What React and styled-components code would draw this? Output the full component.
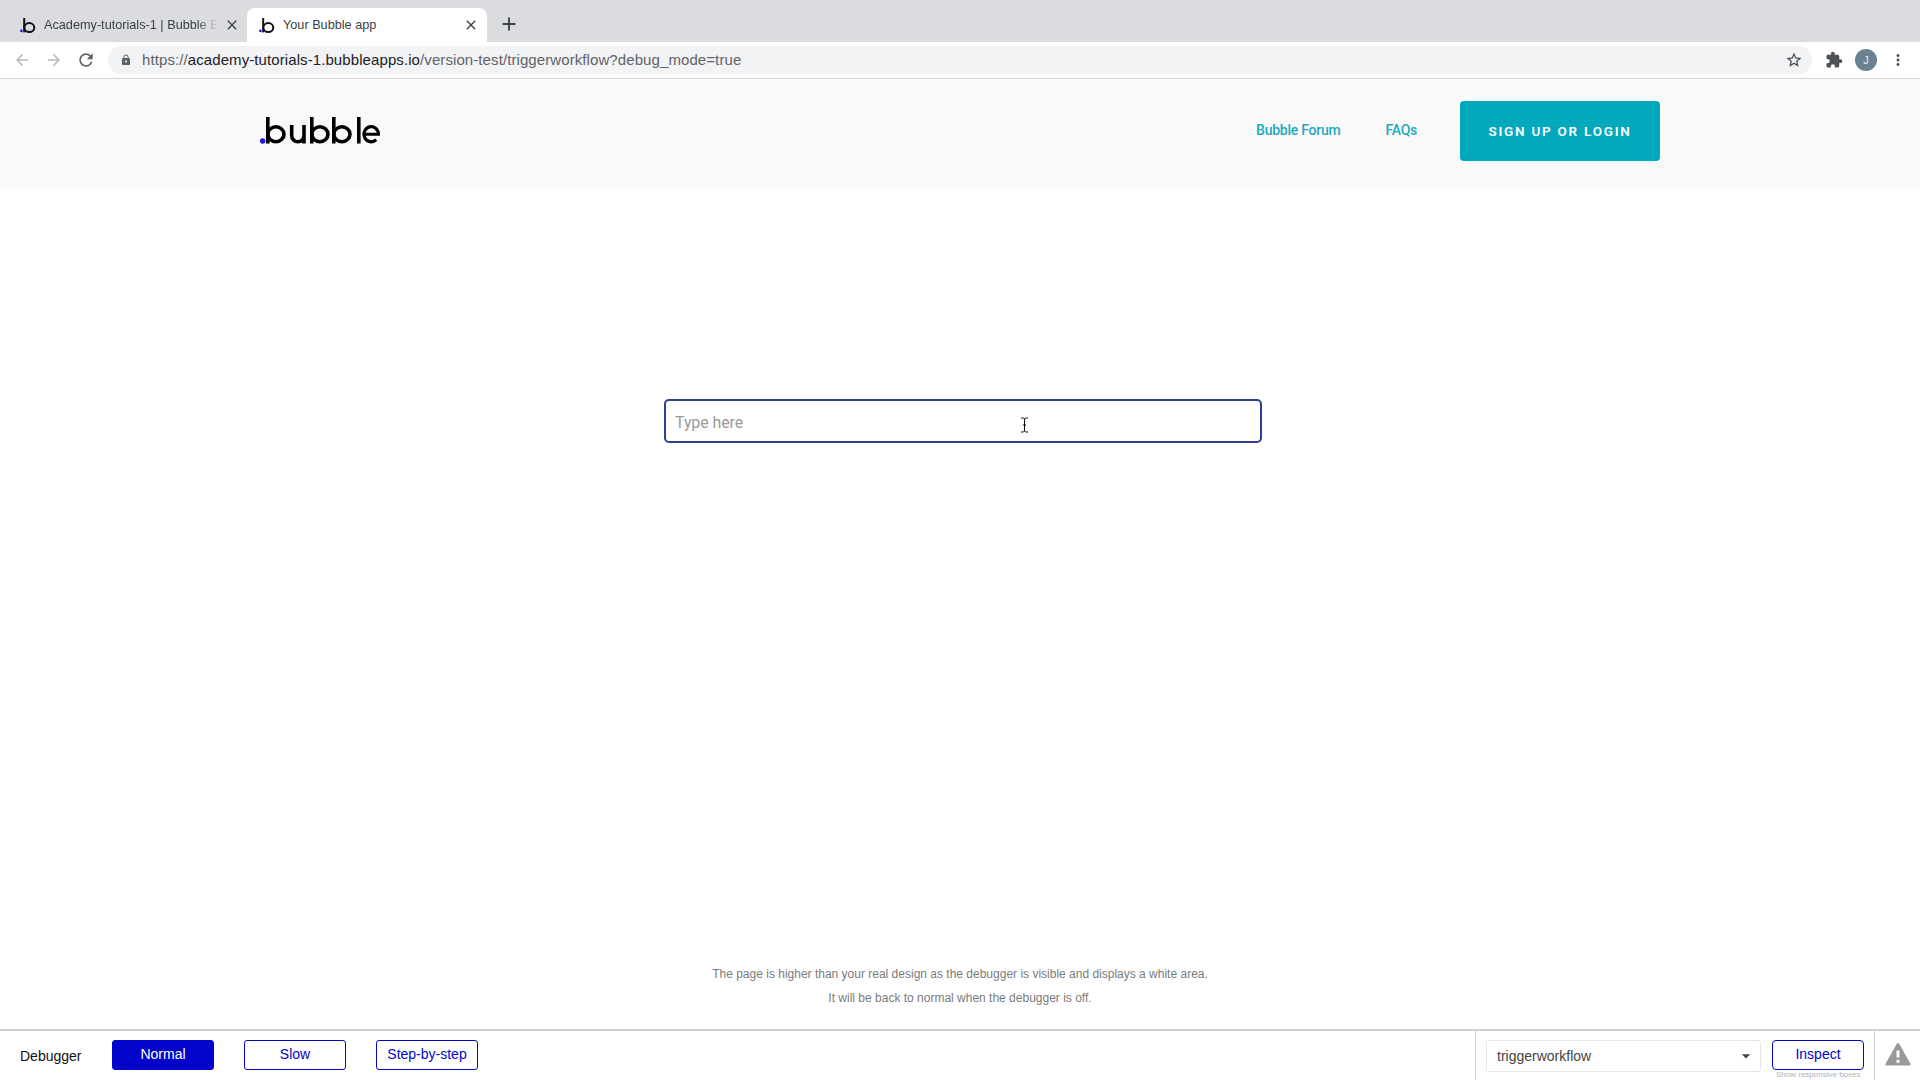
import React from "react";
import styled, { createGlobalStyle } from "styled-components";
import {
  MdArrowBack,
  MdArrowForward,
  MdRefresh,
  MdLock,
  MdStarBorder,
  MdExtension,
  MdMoreVert,
  MdClose,
  MdAdd,
  MdArrowDropDown,
} from "react-icons/md";

const Global = createGlobalStyle`
  html, body { margin: 0; padding: 0; height: 100%; background: #fff; }
  #root { height: 100%; }
  * { box-sizing: border-box; }
`;

const Page = styled.div`
  width: 1920px;
  height: 1080px;
  display: flex;
  flex-direction: column;
  overflow: hidden;
  font-family: "Liberation Sans", Arial, sans-serif;
  background: #fff;
`;

/* Browser chrome */
const TabStrip = styled.div`
  height: 42px;
  flex: none;
  background: #dadce0;
  display: flex;
  align-items: flex-end;
  padding-left: 8px;
`;

const Tab = styled.div`
  width: ${(p) => (p.$active ? 240 : 239)}px;
  height: 34px;
  display: flex;
  align-items: center;
  padding: 0 ${(p) => (p.$active ? 8 : 7)}px 0 12px;
  border-radius: 8px 8px 0 0;
  background: ${(p) => (p.$active ? "#fff" : "transparent")};
  color: #3c4043;
`;

const TabTitle = styled.span`
  flex: 1;
  min-width: 0;
  margin-left: 6px;
  font-size: 12.7px;
  white-space: nowrap;
  overflow: hidden;
  -webkit-mask-image: ${(p) => (p.$fade ? "linear-gradient(90deg, #000 88%, transparent 100%)" : "none")};
  mask-image: ${(p) => (p.$fade ? "linear-gradient(90deg, #000 88%, transparent 100%)" : "none")};
`;

const NewTab = styled.div`
  margin: 0 0 2px 10px;
  width: 24px;
  height: 32px;
  display: flex;
  align-items: center;
  justify-content: center;
  color: #3c4043;
`;

const Toolbar = styled.div`
  height: 37px;
  flex: none;
  background: #fff;
  border-bottom: 1px solid #d4d4da;
  display: flex;
  align-items: center;
  padding: 0 10px 1px 10px;
`;

const NavButton = styled.div`
  width: 24px;
  height: 24px;
  margin-right: ${(p) => p.$gap ?? 8}px;
  display: flex;
  align-items: center;
  justify-content: center;
  color: ${(p) => p.$color || "#5f6368"};
`;

const Omnibox = styled.div`
  flex: 1;
  height: 28px;
  border-radius: 14px;
  background: #f1f3f4;
  display: flex;
  align-items: center;
  padding: 0 9px 0 12px;
  margin-right: 10px;
`;

const Url = styled.div`
  flex: 1;
  margin-left: 10px;
  font-size: 15px;
  letter-spacing: 0.09px;
  color: #5f6368;
  white-space: nowrap;
`;

const UrlHost = styled.span`
  color: #202124;
`;

const Avatar = styled.div`
  width: 22px;
  height: 22px;
  margin: 0 9px 0 9px;
  border-radius: 50%;
  background: #6b8191;
  color: #e8edf0;
  font-size: 11px;
  display: flex;
  align-items: center;
  justify-content: center;
`;

/* Page header */
const Header = styled.header`
  height: 110px;
  flex: none;
  background: #f9f9f9;
  display: flex;
  align-items: center;
  padding: 0 260px 6px;
`;

const LogoMark = styled.svg`
  display: block;
  width: 120px;
  height: 30px;
`;

const HeaderNav = styled.nav`
  margin-left: auto;
  display: flex;
  align-items: center;
`;

const NavLink = styled.a`
  font-family: Roboto, sans-serif;
  font-size: 14px;
  font-weight: 500;
  letter-spacing: -0.25px;
  color: #1fa9bd;
  margin-right: ${(p) => p.$gap}px;
  margin-bottom: 2px;
`;

const SignUp = styled.button`
  width: 200px;
  height: 60px;
  border: 0;
  border-radius: 4px;
  background: #02a9bd;
  color: #fff;
  font-family: Roboto, sans-serif;
  font-size: 13.5px;
  font-weight: 600;
  letter-spacing: 1.75px;
`;

/* Main */
const Main = styled.main`
  flex: 1;
  display: flex;
  flex-direction: column;
  align-items: center;
  padding-top: 210px;
`;

const InputWrap = styled.div`
  position: relative;
  width: 598px;
  height: 44px;
  margin-left: 6px;
`;

const TextInput = styled.div`
  width: 100%;
  height: 100%;
  border: 2px solid #2f3f8f;
  border-radius: 5px;
  background: #fff;
  display: flex;
  align-items: center;
  padding: 2px 9px 0;
  font-family: Roboto, sans-serif;
  font-size: 16px;
  letter-spacing: -0.1px;
  color: #9a9a9a;
`;

const Cursor = styled.svg`
  position: absolute;
  left: 356px;
  top: 18px;
  width: 9px;
  height: 16px;
`;

const Notice = styled.div`
  margin-top: auto;
  padding-bottom: 19px;
  text-align: center;
  font-size: 12px;
  line-height: 24px;
  color: #7b7b7b;
`;

/* Debugger */
const DebugBar = styled.footer`
  height: 51px;
  flex: none;
  border-top: 2px solid #d0d0d0;
  display: flex;
  background: #fff;
`;

const DebugLeft = styled.div`
  flex: 1;
  display: flex;
  align-items: center;
  padding: 0 0 2px 20px;
`;

const DebugLabel = styled.span`
  width: 92px;
  font-size: 14px;
  color: #111;
  padding-top: 2px;
`;

const SpeedButton = styled.button`
  width: 102px;
  height: 30px;
  margin-right: 30px;
  padding: 0 0 2px;
  border: 1px solid #0205c9;
  border-radius: 3px;
  background: ${(p) => (p.$active ? "#0205c9" : "#fff")};
  color: ${(p) => (p.$active ? "#fff" : "#0205c9")};
  font-family: "Liberation Sans", Arial, sans-serif;
  font-size: 14px;
`;

const DebugRight = styled.div`
  position: relative;
  width: 400px;
  flex: none;
  border-left: 1px solid #d0d0d0;
  border-right: 1px solid #d0d0d0;
  display: flex;
  align-items: flex-start;
  padding: 9px 0 0 10px;
`;

const PageSelect = styled.div`
  width: 275px;
  height: 32px;
  border: 1px solid #e6e6e6;
  border-radius: 3px;
  display: flex;
  align-items: center;
  justify-content: space-between;
  padding: 0 4px 0 10px;
  font-size: 14px;
  color: #444;
`;

const InspectButton = styled(SpeedButton)`
  width: 92px;
  margin: 0 0 0 11px;
  border-radius: 4px;
`;

const Caption = styled.span`
  position: absolute;
  left: 300px;
  top: 39px;
  font-size: 8px;
  line-height: 9px;
  color: #aeb0b8;
  white-space: nowrap;
`;

const WarningSlot = styled.div`
  width: 45px;
  flex: none;
  display: flex;
  align-items: center;
  justify-content: center;
  padding-bottom: 3px;
`;

function WarningIcon() {
  return (
    <svg width="26" height="24" viewBox="0 0 26 24">
      <path d="M13 2.2 24.4 22.4H1.6Z" fill="#999" stroke="#999" strokeWidth="2.4" strokeLinejoin="round" />
      <path d="M13 8.5v7" stroke="#fff" strokeWidth="3" fill="none" />
      <path d="M13 17.8v3" stroke="#fff" strokeWidth="3" fill="none" />
    </svg>
  );
}

function Favicon() {
  return (
    <svg width="18" height="18" viewBox="0 0 18 18" style={{ flex: "none" }}>
      <circle cx="1.4" cy="14.9" r="1.3" fill="#1212d8" />
      <path d="M4.2 2v14.4" stroke="#111" strokeWidth="2" fill="none" />
      <ellipse cx="9.3" cy="11.6" rx="5" ry="4.5" stroke="#111" strokeWidth="2" fill="none" />
    </svg>
  );
}

function Logo() {
  const sw = 3.6;
  const base = 27.5;
  const cy = 18.25;
  const b = (x) => (
    <g key={x}>
      <path d={`M${x + 1.8} 1V${base}`} stroke="#000" strokeWidth={sw} fill="none" />
      <ellipse cx={x + 9.9} cy={cy} rx="8.1" ry="7.5" stroke="#000" strokeWidth={sw} fill="none" />
    </g>
  );
  return (
    <LogoMark viewBox="0 0 120 30" role="img" aria-label="bubble">
      <circle cx="2.7" cy="25" r="2.7" fill="#1a1ae6" />
      {b(6)}
      <path
        d={`M31.7 9V19.5a6.15 6.3 0 0 0 12.3 0V9M44 9V${base}`}
        stroke="#000"
        strokeWidth={sw}
        fill="none"
      />
      {b(50)}
      {b(72)}
      <path d={`M98.8 1V${base}`} stroke="#000" strokeWidth={sw} fill="none" />
      <path
        d={`M104 ${cy}H118.4a7.2 7.55 0 1 0 -2.2 5.4`}
        stroke="#000"
        strokeWidth={sw - 0.4}
        fill="none"
      />
    </LogoMark>
  );
}

export default function App() {
  return (
    <Page>
      <Global />
      <TabStrip>
        <Tab>
          <Favicon />
          <TabTitle $fade>Academy-tutorials-1 | Bubble Editor</TabTitle>
          <MdClose size={16} style={{ marginLeft: 6 }} />
        </Tab>
        <Tab $active>
          <Favicon />
          <TabTitle>Your Bubble app</TabTitle>
          <MdClose size={16} />
        </Tab>
        <NewTab>
          <MdAdd size={22} />
        </NewTab>
      </TabStrip>
      <Toolbar>
        <NavButton $color="#b5b7ba">
          <MdArrowBack size={18} />
        </NavButton>
        <NavButton $color="#b5b7ba">
          <MdArrowForward size={18} />
        </NavButton>
        <NavButton $gap={10}>
          <MdRefresh size={20} />
        </NavButton>
        <Omnibox>
          <MdLock size={12} color="#5f6368" />
          <Url>
            https://<UrlHost>academy-tutorials-1.bubbleapps.io</UrlHost>/version-test/triggerworkflow?debug_mode=true
          </Url>
          <MdStarBorder size={18} color="#45484c" />
        </Omnibox>
        <NavButton $gap={0} $color="#4f5357">
          <MdExtension size={18} />
        </NavButton>
        <Avatar>J</Avatar>
        <NavButton $gap={0} $color="#4f5357">
          <MdMoreVert size={18} />
        </NavButton>
      </Toolbar>
      <Header>
        <Logo />
        <HeaderNav>
          <NavLink $gap={45}>Bubble Forum</NavLink>
          <NavLink $gap={43}>FAQs</NavLink>
          <SignUp>SIGN UP OR LOGIN</SignUp>
        </HeaderNav>
      </Header>
      <Main>
        <InputWrap>
          <TextInput>Type here</TextInput>
          <Cursor viewBox="0 0 9 16">
            <path d="M1 1h2.5l1 1 1-1H8M4.5 2v12M1 15h2.5l1-1 1 1H8M3 8h3" stroke="#111" strokeWidth="1" fill="none" />
          </Cursor>
        </InputWrap>
        <Notice>
          The page is higher than your real design as the debugger is visible and displays a white area.
          <br />
          It will be back to normal when the debugger is off.
        </Notice>
      </Main>
      <DebugBar>
        <DebugLeft>
          <DebugLabel>Debugger</DebugLabel>
          <SpeedButton $active>Normal</SpeedButton>
          <SpeedButton>Slow</SpeedButton>
          <SpeedButton>Step-by-step</SpeedButton>
        </DebugLeft>
        <DebugRight>
          <PageSelect>
            triggerworkflow
            <MdArrowDropDown size={20} color="#444" />
          </PageSelect>
          <InspectButton>Inspect</InspectButton>
          <Caption>Show responsive boxes</Caption>
        </DebugRight>
        <WarningSlot>
          <WarningIcon />
        </WarningSlot>
      </DebugBar>
    </Page>
  );
}
